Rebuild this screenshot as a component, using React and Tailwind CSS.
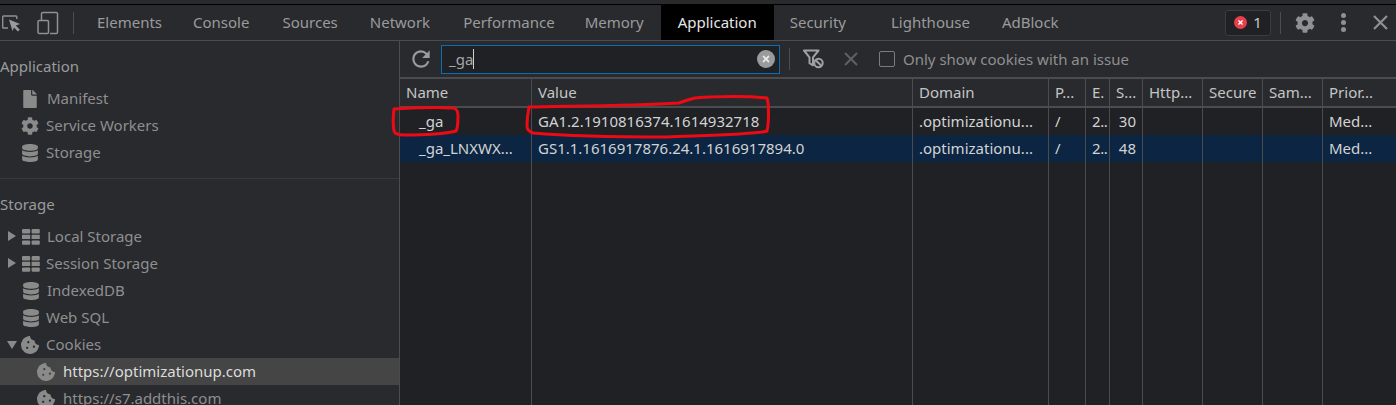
import React from "react";
import { FaFile, FaCog, FaDatabase, FaCookieBite, FaTimes } from "react-icons/fa";
import { MdRefresh } from "react-icons/md";

const font = "font-['Noto_Sans','Open_Sans',sans-serif]";

function GridIcon() {
  return (
    <svg width="18" height="16" viewBox="0 0 18 16" className="text-[#8a8a8a]" fill="currentColor">
      <rect x="0" y="0" width="8.2" height="4.4" rx="1" />
      <rect x="9.6" y="0" width="8.2" height="4.4" rx="1" />
      <rect x="0" y="5.7" width="8.2" height="4.4" rx="0.3" />
      <rect x="9.6" y="5.7" width="8.2" height="4.4" rx="0.3" />
      <rect x="0" y="11.4" width="8.2" height="4.4" rx="1" />
      <rect x="9.6" y="11.4" width="8.2" height="4.4" rx="1" />
    </svg>
  );
}

function InspectIcon() {
  return (
    <svg width="20" height="20" viewBox="0 0 20 20" fill="none">
      <path d="M7 15H2.5A.8.8 0 0 1 1.7 14.2V3.8A.8.8 0 0 1 2.5 3H15a.8.8 0 0 1 .8.8V6" stroke="#8f9092" strokeWidth="1.4" />
      <path d="M8 6.5 19 11l-4.2 1.6 4 4.2-1.9 1.8-3.9-4.2L11.5 18Z" fill="#9a9b9d" />
    </svg>
  );
}

function DeviceIcon() {
  return (
    <svg width="22" height="24" viewBox="0 0 22 24" fill="none" stroke="#8f9092" strokeWidth="1.5">
      <path d="M4.5 9V2.8A1.3 1.3 0 0 1 5.8 1.5h13.4A1.3 1.3 0 0 1 20.5 2.8v18.4a1.3 1.3 0 0 1-1.3 1.3H13" />
      <rect x="1" y="9.5" width="10.5" height="13" rx="1.3" />
    </svg>
  );
}

function FilterOff() {
  return (
    <svg width="22" height="20" viewBox="0 0 22 20" fill="none">
      <path d="M1 1.5h14.5l-5.5 6.8v8l-3.5-2.2V8.3Z" stroke="#a0a1a3" strokeWidth="2" strokeLinejoin="round" />
      <circle cx="15.5" cy="14" r="4.2" fill="#292a2d" stroke="#a0a1a3" strokeWidth="2" />
      <path d="m12.7 11.2 5.6 5.6" stroke="#a0a1a3" strokeWidth="2" />
    </svg>
  );
}

function Tab({ children, active, className = "" }) {
  return (
    <div
      className={`flex h-[35px] items-center whitespace-nowrap px-[15px] text-[15px] ${active ? "bg-black text-[#e6e6e6]" : "text-[#9a9b9d]"} ${className}`}
    >
      {children}
    </div>
  );
}

function SideRow({ icon, label, arrow, indent = "pl-[20px]", selected, gap = "gap-[9px]" }) {
  return (
    <div className={`relative flex h-[27px] items-center ${indent} ${gap} text-[15px] ${selected ? "bg-[#454545] text-[#dcdcdc]" : "text-[#8e8f91]"}`}>
      {arrow === "right" && (
        <span className="absolute left-[8px] top-[8px] h-0 w-0 border-y-[5px] border-l-[8px] border-y-transparent border-l-[#8a8a8a]" />
      )}
      {arrow === "down" && (
        <span className="absolute left-[7px] top-[10px] h-0 w-0 border-x-[5px] border-t-[8px] border-x-transparent border-t-[#8a8a8a]" />
      )}
      <span className="flex w-[18px] shrink-0 items-center justify-center text-[#8a8a8a]">{icon}</span>
      <span className="whitespace-nowrap">{label}</span>
    </div>
  );
}

const columns = "grid grid-cols-[131px_381px_136px_37px_24px_33px_60px_60px_60px_74px]";
const headers = ["Name", "Value", "Domain", "P...", "E.", "S...", "Http...", "Secure", "Sam...", "Prior..."];
const rows = [
  { cells: ["_ga", "GA1.2.1910816374.1614932718", ".optimizationu...", "/", "2..", "30", "", "", "", "Med..."] },
  { cells: ["_ga_LNXWX...", "GS1.1.1616917876.24.1.1616917894.0", ".optimizationu...", "/", "2..", "48", "", "", "", "Med..."], selected: true },
];

export default function App() {
  return (
    <div className={`relative flex h-[405px] w-[1396px] flex-col overflow-hidden bg-[#292a2d] ${font}`}>
      <div className="h-[4px] shrink-0 bg-[#2a2a2c]" />
      <div className="h-px shrink-0 bg-black" />

      {/* Main tab bar */}
      <div className="flex h-[36px] shrink-0 items-center border-b border-[#4a4c50]">
        <div className="flex w-[82px] shrink-0 items-center pl-[1px]">
          <InspectIcon />
          <span className="ml-[16px]"><DeviceIcon /></span>
          <span className="ml-[14px] h-[22px] w-px bg-[#4a4c50]" />
        </div>
        <Tab>Elements</Tab>
        <Tab className="pl-[16px]">Console</Tab>
        <Tab className="pl-[18px]">Sources</Tab>
        <Tab className="pl-[17px]">Network</Tab>
        <Tab className="pl-[18px]">Performance</Tab>
        <Tab className="pl-[15px] pr-[17px]">Memory</Tab>
        <Tab active className="w-[113px] justify-center px-0">Application</Tab>
        <Tab className="pl-[16px] pr-[30px]">Security</Tab>
        <Tab>Lighthouse</Tab>
        <Tab className="pl-[17px]">AdBlock</Tab>
        <div className="ml-auto flex items-center pr-[8px]">
          <div className="flex h-[26px] w-[46px] items-center justify-center gap-[6px] rounded-[3px] border border-[#3b3c3f] bg-[#202124] text-[15px] text-[#c8c8c8]">
            <span className="flex h-[13px] w-[13px] items-center justify-center rounded-full bg-[#e8404a] text-white">
              <FaTimes size={7} />
            </span>
            1
          </div>
          <span className="ml-[9px] h-[22px] w-px bg-[#4a4c50]" />
          <span className="ml-[14px] text-[#8f9092]"><FaCog size={20} /></span>
          <span className="ml-[26px] flex flex-col gap-[2px]">
            <i className="h-[5px] w-[5px] rounded-full bg-[#8f9092]" />
            <i className="h-[5px] w-[5px] rounded-full bg-[#8f9092]" />
            <i className="h-[5px] w-[5px] rounded-full bg-[#8f9092]" />
          </span>
          <span className="ml-[27px] text-[#8f9092]">
            <svg width="15" height="15" viewBox="0 0 15 15" stroke="currentColor" strokeWidth="2.2"><path d="m1 1 13 13M14 1 1 14" /></svg>
          </span>
        </div>
      </div>

      <div className="flex min-h-0 flex-1">
        {/* Sidebar */}
        <aside className="w-[400px] shrink-0 overflow-hidden border-r border-[#4a4c50]">
          <div className="flex h-[44px] items-center pt-[6px] text-[15px] text-[#9a9b9d]">Application</div>
          <SideRow icon={<FaFile size={18} />} label="Manifest" indent="pl-[21px]" gap="gap-[8px]" />
          <SideRow icon={<FaCog size={18} />} label="Service Workers" indent="pl-[21px]" gap="gap-[7px]" />
          <SideRow icon={<FaDatabase size={18} />} label="Storage" indent="pl-[21px]" gap="gap-[7px]" />
          <div className="mt-[12px] border-t border-[#393a3d]" />
          <div className="flex h-[44px] items-center pt-[6px] text-[15px] text-[#9a9b9d]">Storage</div>
          <SideRow icon={<GridIcon />} label="Local Storage" arrow="right" indent="pl-[22px]" gap="gap-[7px]" />
          <SideRow icon={<GridIcon />} label="Session Storage" arrow="right" indent="pl-[22px]" gap="gap-[6px]" />
          <SideRow icon={<FaDatabase size={18} />} label="IndexedDB" indent="pl-[22px]" gap="gap-[7px]" />
          <SideRow icon={<FaDatabase size={18} />} label="Web SQL" indent="pl-[22px]" gap="gap-[6px]" />
          <SideRow icon={<FaCookieBite size={18} />} label="Cookies" arrow="down" indent="pl-[21px]" gap="gap-[7px]" />
          <SideRow icon={<FaCookieBite size={18} />} label="https://optimizationup.com" indent="pl-[37px]" gap="gap-[8px]" selected />
          <SideRow icon={<FaCookieBite size={18} />} label="https://s7.addthis.com" indent="pl-[37px]" gap="gap-[8px]" />
        </aside>

        {/* Cookies panel */}
        <section className="flex min-w-0 flex-1 flex-col">
          <div className="flex h-[38px] shrink-0 items-center border-b-2 border-[#4a4c50]">
            <span className="ml-[8px] text-[#9a9b9d]"><MdRefresh size={26} /></span>
            <div className="ml-[7px] flex h-[29px] w-[339px] items-center border border-[#0f6cb0] bg-[#202124] pl-[7px] pr-[4px] text-[15px] text-[#a5a6a8]">
              <span>_ga</span>
              <span className="h-[20px] w-px bg-[#cfcfcf]" />
              <span className="ml-auto flex h-[18px] w-[18px] items-center justify-center rounded-full bg-[#9a9b9d] text-[#e8e8e8]">
                <FaTimes size={10} />
              </span>
            </div>
            <span className="ml-[9px] h-[22px] w-px bg-[#4a4c50]" />
            <span className="ml-[13px]"><FilterOff /></span>
            <span className="ml-[19px] text-[#5f6063]">
              <svg width="14" height="14" viewBox="0 0 14 14" stroke="currentColor" strokeWidth="2"><path d="m1 1 12 12M13 1 1 13" /></svg>
            </span>
            <span className="ml-[21px] h-[16px] w-[16px] rounded-[2px] border border-[#7b7c7f]" />
            <span className="ml-[8px] text-[15px] text-[#8e8f91]">Only show cookies with an issue</span>
          </div>

          <div className={`${columns} h-[29px] shrink-0 border-b-2 border-[#4a4c50]`}>
            {headers.map((h, i) => (
              <div key={h} className={`flex items-center whitespace-nowrap pl-[6px] text-[15px] text-[#c4c5c7] ${i ? "border-l border-[#4a4c50]" : ""}`}>{h}</div>
            ))}
          </div>

          <div className="relative flex min-h-0 flex-1 flex-col bg-[#202124]">
            {rows.map((row) => (
              <div key={row.cells[0]} className={`${columns} h-[27px] shrink-0 ${row.selected ? "bg-[#0b2542]" : ""}`}>
                {row.cells.map((c, i) => (
                  <div
                    key={i}
                    className={`flex items-center whitespace-nowrap text-[15px] text-[#d2d3d5] ${i ? "border-l border-[#4a4c50]" : ""} ${i === 0 ? "pl-[19px]" : i === 5 ? "justify-end pr-[6px]" : i === 4 ? "pl-[6px] tracking-tight" : "pl-[6px]"}`}
                  >
                    {c}
                  </div>
                ))}
              </div>
            ))}
            <div className={`${columns} flex-1`}>
              {headers.map((h, i) => (
                <div key={h} className={i ? "border-l border-[#4a4c50]" : ""} />
              ))}
            </div>
          </div>
        </section>
      </div>

      {/* Red hand-drawn annotations */}
      <svg className="pointer-events-none absolute left-0 top-0" width="1396" height="405" fill="none" stroke="#ee0a14" strokeWidth="3" strokeLinecap="round" strokeLinejoin="round">
        <path d="M394 109c18 -1 46 -2 58 -1c5 0 6 3 6 8c0 6 0 12 -2 15c-12 3 -36 4 -52 4c-6 0 -9 -1 -10 -4c-1 -6 -1 -14 0 -22" />
        <path d="M529 107c40 -1 100 -1 150 -4c6 -2 10 -4 16 -5c22 -2 56 -2 72 0c2 6 2 24 0 33c-8 3 -50 4 -100 6c-40 0 -100 -1 -134 -4c-3 -1 -6 -3 -6 -7c0 -7 1 -14 2 -19" />
      </svg>
    </div>
  );
}
